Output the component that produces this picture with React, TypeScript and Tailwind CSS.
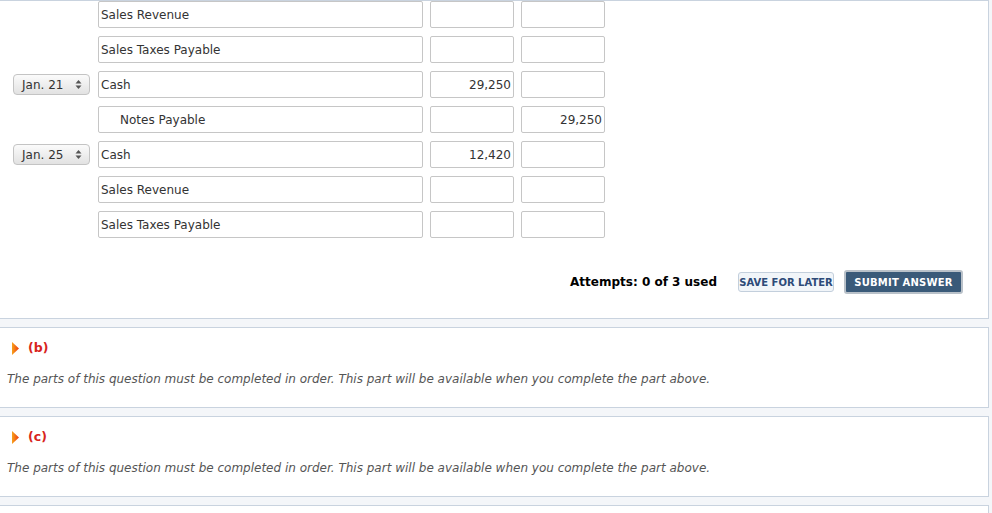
import React from "react";

type Row = {
  date?: string;
  account: string;
  indent?: boolean;
  debit?: string;
  credit?: string;
};

const rows: Row[] = [
  { account: "Sales Revenue" },
  { account: "Sales Taxes Payable" },
  { date: "Jan. 21", account: "Cash", debit: "29,250" },
  { account: "Notes Payable", indent: true, credit: "29,250" },
  { date: "Jan. 25", account: "Cash", debit: "12,420" },
  { account: "Sales Revenue" },
  { account: "Sales Taxes Payable" },
];

function DateSelect({ value }: { value: string }) {
  return (
    <div className="ml-[13px] flex h-[21px] w-[77px] items-center justify-between rounded-[4px] border border-[#c4c4c4] bg-gradient-to-b from-[#fbfbfb] to-[#e2e2e2] pl-[8px] pr-[7px] text-[12px] text-[#333]">
      <span>{value}</span>
      <svg width="7" height="11" viewBox="0 0 7 11">
        <path d="M3.5 1 L6.5 4.5 L0.5 4.5 Z" fill="#555" />
        <path d="M3.5 10 L6.5 6.5 L0.5 6.5 Z" fill="#555" />
      </svg>
    </div>
  );
}

function Box({
  w,
  children,
  align = "left",
  indent,
}: {
  w: string;
  children?: React.ReactNode;
  align?: "left" | "right";
  indent?: boolean;
}) {
  return (
    <div
      className={`${w} flex h-[27px] items-center rounded-[2px] border border-[#c6c6c6] bg-white text-[12px] text-[#333] ${
        align === "right" ? "justify-end pr-[2px]" : indent ? "pl-[21px]" : "pl-[2px]"
      }`}
    >
      {children}
    </div>
  );
}

function LockedPart({ label }: { label: string }) {
  return (
    <div className="mt-[8px] h-[81px] w-[989px] border-y border-r border-[#c9d3df] bg-white">
      <div className="flex items-center pl-[12px] pt-[11px]">
        <svg width="7" height="13" viewBox="0 0 7 13">
          <defs>
            <linearGradient id={`g${label}`} x1="0" x2="1" y1="0" y2="0">
              <stop offset="0" stopColor="#f7a21b" />
              <stop offset="1" stopColor="#ee3b12" />
            </linearGradient>
          </defs>
          <path d="M0 0 L7 6.5 L0 13 Z" fill={`url(#g${label})`} />
        </svg>
        <span className="ml-[9px] text-[12.5px] font-bold text-[#d8241c]">({label})</span>
      </div>
      <div className="mt-[12px] pl-[7px] text-[12px] italic text-[#555]">
        The parts of this question must be completed in order. This part will be available when you complete the part above.
      </div>
    </div>
  );
}

export default function App() {
  return (
    <div className="h-[513px] w-[992px] overflow-hidden bg-[#f4f6f9] font-['DejaVu_Sans',Verdana,sans-serif]">
      <div className="h-[319px] w-[989px] border-y border-r border-[#c9d3df] bg-white">
        <div className="flex flex-col gap-[8px]">
          {rows.map((r, i) => (
            <div key={i} className="flex items-center">
              <div className="flex w-[98px] items-center">
                {r.date && <DateSelect value={r.date} />}
              </div>
              <Box w="w-[325px]" indent={r.indent}>
                {r.account}
              </Box>
              <div className="ml-[7px]">
                <Box w="w-[84px]" align="right">
                  {r.debit}
                </Box>
              </div>
              <div className="ml-[7px]">
                <Box w="w-[84px]" align="right">
                  {r.credit}
                </Box>
              </div>
            </div>
          ))}
        </div>
        <div className="mt-[32px] flex items-center justify-end pr-[25px]">
          <span className="text-[12px] font-bold text-black">Attempts: 0 of 3 used</span>
          <button className="ml-[21px] h-[20px] w-[96px] rounded-[3px] border border-[#c3cfdc] bg-[#f1f5f9] text-[10px] font-bold text-[#2d4a78]">
            SAVE FOR LATER
          </button>
          <button className="ml-[10px] h-[24px] w-[119px] rounded-[3px] border-2 border-[#b9c1c9] bg-[#3a5a79] text-[10px] font-bold tracking-[0.2px] text-white">
            SUBMIT ANSWER
          </button>
        </div>
      </div>
      <LockedPart label="b" />
      <LockedPart label="c" />
      <div className="mt-[8px] h-[20px] w-[989px] border-t border-r border-[#c9d3df] bg-white" />
    </div>
  );
}
